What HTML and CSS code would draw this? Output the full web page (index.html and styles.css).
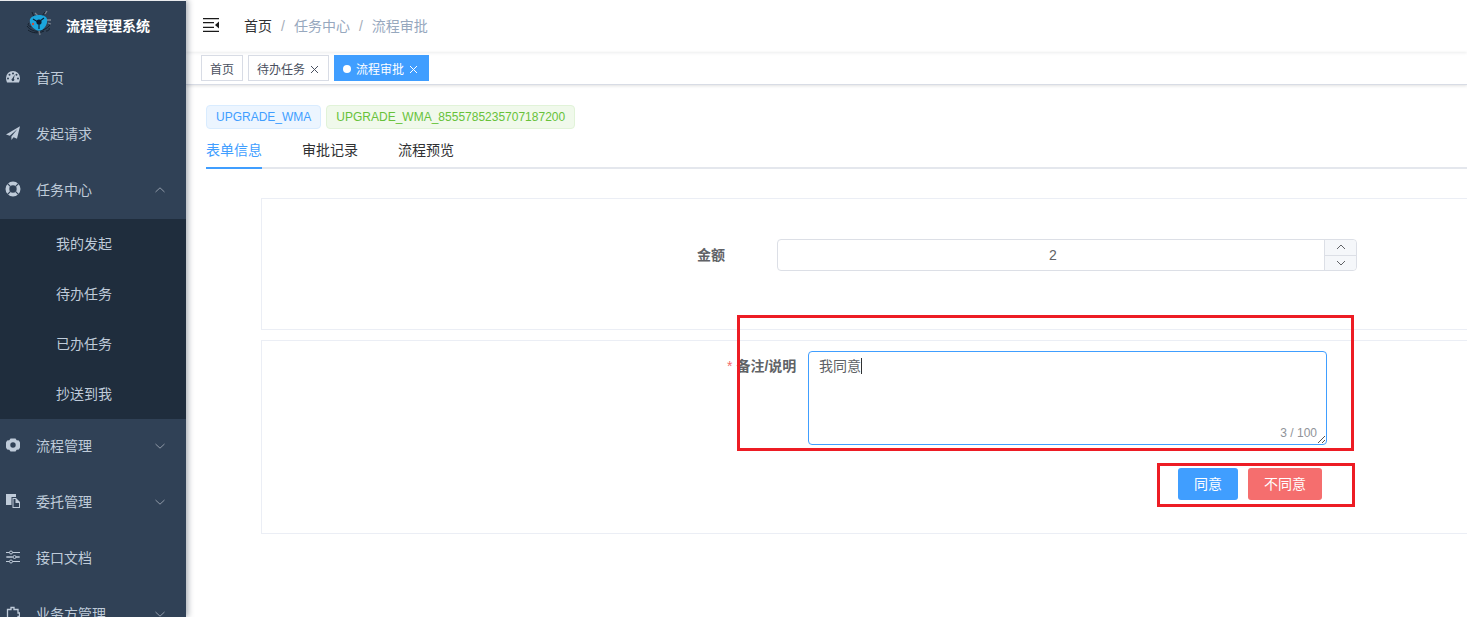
FILE: index.html
```html
<!DOCTYPE html>
<html lang="zh">
<head>
<meta charset="utf-8">
<title>流程管理系统</title>
<link rel="stylesheet" href="styles.css">
</head>
<body>
<div class="app">
  <aside class="sidebar">
    <div class="logo">
      <svg class="logo-img" viewBox="0 0 26 26" width="26" height="26">
        <g fill="none" stroke="#15202c" stroke-width="1"><path d="M1 16c3 4 8 6 12 5s8-2 11-6M2 20c4 3 10 4 16 1M3 13c-2 2 0 3 2 4M20 21c2 0 4-1 3-3"/><path d="M8 7 6 2M16 6l3-4"/></g>
        <path d="M9 3l3 3M21 1l-2 3M21 10h4M22 13l3 1" stroke="#7c8590" stroke-width="1.300" fill="none"/>
        <path d="M4 9c2-3 5-4 9-4s7 1 8 4c1 4-2 9-5 11-2 1-4 1-6 0-4-2-7-7-6-11z" fill="#1ba5dc"/>
        <circle cx="13" cy="12" r="2.600" fill="#0e1e30"/>
        <path d="M7 9l5 3M18 8l-4 3M13 14v5" stroke="#0e1e30" stroke-width="1.100" fill="none"/>
        <circle cx="7" cy="14" r="1.200" fill="#c8503c"/>
        <path d="M13 21l1 4" stroke="#6d7783" stroke-width="1.500"/>
      </svg>
      <span class="logo-title">流程管理系统</span>
    </div>
    <nav class="menu">
      <div class="menu-item">
        <svg class="ico" viewBox="0 0 14 14"><path fill-rule="evenodd" d="M7 1a7 7 0 0 0-7 7c0 1.500.4 3 1 4.500h12c.6-1.500 1-3 1-4.500a7 7 0 0 0-7-7zM7 2.400a1 1 0 1 1 0 2 1 1 0 0 1 0-2zM3.500 3.800a1 1 0 1 1 0 2 1 1 0 0 1 0-2zM10.500 3.800a1 1 0 1 1 0 2 1 1 0 0 1 0-2zM2 7.400a1 1 0 1 1 0 2 1 1 0 0 1 0-2zM12 7.400a1 1 0 1 1 0 2 1 1 0 0 1 0-2zM8.800 4.500 7.900 8.700a1.400 1.400 0 1 1-1.600-.2z"/></svg>
        <span class="menu-label">首页</span>
      </div>
      <div class="menu-item">
        <svg class="ico" viewBox="0 0 14 14"><path d="M14 .2 0 8.400l3.800 1.400L11.500 3 5.400 10.500v3.400l2.200-2.600 3.400 1.400z"/></svg>
        <span class="menu-label">发起请求</span>
      </div>
      <div class="menu-item">
        <svg class="ico ico-ring" viewBox="0 0 16 16"><path fill-rule="evenodd" d="M8 .5a7.500 7.500 0 1 0 0 15 7.500 7.500 0 0 0 0-15zM8 4.300a3.700 3.700 0 1 1 0 7.400 3.700 3.700 0 0 1 0-7.400z"/><path d="M2.300 2.300l3 3M13.700 2.300l-3 3M2.300 13.700l3-3M13.700 13.700l-3-3" stroke="#304156" stroke-width="1.200"/></svg>
        <span class="menu-label">任务中心</span>
        <svg class="chev" viewBox="0 0 12 12"><path d="M1.500 8 6 3.800 10.500 8"/></svg>
      </div>
      <div class="submenu">
        <div class="sub-item">我的发起</div>
        <div class="sub-item">待办任务</div>
        <div class="sub-item">已办任务</div>
        <div class="sub-item">抄送到我</div>
      </div>
      <div class="menu-item">
        <svg class="ico" viewBox="0 0 14 14"><path fill-rule="evenodd" d="M4.500.4h5l1.200 1.900 2.200.1L14 4.500v5l-1.100 2.100-2.200.1-1.200 1.900h-5l-1.200-1.900-2.200-.1L0 9.500v-5l1.100-2.100 2.200-.1zM7 4.300a2.700 2.700 0 1 0 0 5.400 2.700 2.700 0 0 0 0-5.400z"/></svg>
        <span class="menu-label">流程管理</span>
        <svg class="chev" viewBox="0 0 12 12"><path d="M1.500 4 6 8.200 10.500 4"/></svg>
      </div>
      <div class="menu-item">
        <svg class="ico" viewBox="0 0 14 14"><path d="M0 0h10v3H5.500v8H0z"/><path fill-rule="evenodd" d="M6.500 4H10l4 4v6H6.500zM7.500 5v8H13V9H9.500V5z"/></svg>
        <span class="menu-label">委托管理</span>
        <svg class="chev" viewBox="0 0 12 12"><path d="M1.500 4 6 8.200 10.500 4"/></svg>
      </div>
      <div class="menu-item">
        <svg class="ico ico-line" viewBox="0 0 14 14"><path d="M0 2.500h3.500M6.500 2.500H14M0 7h7M10 7h4M0 11.500h3.500M6.500 11.500H14"/><circle cx="5" cy="2.500" r="1.500"/><circle cx="8.500" cy="7" r="1.500"/><circle cx="5" cy="11.500" r="1.500"/><path d="M1 7h5M10 7h3" stroke-width="2" stroke-opacity=".5"/></svg>
        <span class="menu-label">接口文档</span>
      </div>
      <div class="menu-item">
        <svg class="ico ico-line" viewBox="0 0 14 14"><path d="M5 3.500V1.500h3v2h4V7h1.500v3.500H12V14H1.500V3.500z" stroke-width="1.300"/></svg>
        <span class="menu-label">业务方管理</span>
        <svg class="chev" viewBox="0 0 12 12"><path d="M1.500 4 6 8.200 10.500 4"/></svg>
      </div>
    </nav>
  </aside>

  <main class="main">
    <header class="navbar">
      <svg class="hamburger" viewBox="0 0 16 14"><path d="M0 0h16v1.300H0zM0 4h11v1.300H0zM0 8.700h11V10H0zM0 12.700h16V14H0z"/><path d="M16 3.600v6.800L12 7z"/></svg>
      <div class="breadcrumb">
        <span class="crumb-root">首页</span><span class="crumb-sep">/</span><span class="crumb">任务中心</span><span class="crumb-sep">/</span><span class="crumb">流程审批</span>
      </div>
    </header>
    <div class="tags">
      <span class="tag">首页</span>
      <span class="tag tag-close">待办任务<svg class="tag-x" viewBox="0 0 9 9"><path d="M1 1l7 7M8 1 1 8"/></svg></span>
      <span class="tag tag-close tag-active"><i class="dot"></i>流程审批<svg class="tag-x" viewBox="0 0 9 9"><path d="M1 1l7 7M8 1 1 8"/></svg></span>
    </div>
    <section class="content">
      <div class="chips">
        <span class="chip chip-blue">UPGRADE_WMA</span>
        <span class="chip chip-green">UPGRADE_WMA_8555785235707187200</span>
      </div>
      <div class="tabs">
        <span class="tab tab-active">表单信息</span>
        <span class="tab">审批记录</span>
        <span class="tab">流程预览</span>
      </div>
      <div class="panel panel-a">
        <label class="field-label">金额</label>
        <div class="number">
          <span class="number-value">2</span>
          <div class="stepper">
            <span class="step"><svg viewBox="0 0 12 12"><path d="M2 8l4-4 4 4"/></svg></span>
            <span class="step"><svg viewBox="0 0 12 12"><path d="M2 4l4 4 4-4"/></svg></span>
          </div>
        </div>
      </div>
      <div class="panel panel-b">
        <div class="remark-row">
          <label class="remark-label"><span class="req">*</span>备注/说明</label>
          <div class="textarea">
            <span class="textarea-text">我同意</span><span class="caret"></span>
            <span class="count">3 / 100</span>
            <svg class="grip" viewBox="0 0 8 8"><path d="M8 1 1 8M8 5 5 8"/></svg>
          </div>
        </div>
        <div class="actions">
          <span class="btn btn-primary">同意</span>
          <span class="btn btn-danger">不同意</span>
        </div>
      </div>
    </section>
  </main>
</div>
<div class="mark mark-a"></div>
<div class="mark mark-b"></div>
</body>
</html>
```
FILE: styles.css
```css
* { box-sizing: border-box; }
html, body { margin: 0; height: 100%; overflow: hidden; background: #fff; }
body { font-family: "Liberation Sans", "Noto Sans CJK SC", sans-serif; font-size: 14px; color: #303133; }
.app { display: flex; width: 1467px; height: 617px; overflow: hidden; }

.sidebar { width: 186px; flex: none; height: 617px; overflow: hidden; background: #304156; box-shadow: 2px 0 6px rgba(0,21,41,.35); position: relative; z-index: 2; border-top: 1px solid #e9ebee; }
.logo { height: 50px; display: flex; align-items: center; padding: 0 0 3px 26px; }
.logo-img { flex: none; margin-top: -3px; }
.logo-title { margin-left: 14px; color: #fff; font-size: 14px; font-weight: 700; }
.menu-item { height: 56px; display: flex; align-items: center; padding: 0 0 4px 6px; color: #bfcbd9; position: relative; }
.ico { width: 14px; height: 14px; fill: #bfcbd9; flex: none; }
.ico-ring { width: 16px; height: 16px; margin: 0 -1px; }
.ico-line { fill: none; stroke: #bfcbd9; stroke-width: 1; }
.menu-label { margin-left: 16px; }
.chev { position: absolute; left: 154px; top: 21px; width: 12px; height: 12px; fill: none; stroke: #909aa8; stroke-width: 1; }
.submenu { background: #1f2d3d; }
.sub-item { height: 50px; line-height: 50px; padding-left: 56px; color: #bfcbd9; }

.main { flex: 1; min-width: 0; }
.navbar { height: 52px; display: flex; align-items: center; padding: 0 0 2px 17px; box-shadow: 0 1px 3px rgba(0,21,41,.08); }
.hamburger { width: 16px; height: 14px; fill: #1a1a1a; }
.breadcrumb { margin-left: 25px; color: #97a8be; }
.crumb-root { color: #303133; }
.crumb-sep { margin: 0 9px; color: #a5adb8; }
.crumb { color: #97a8be; }
.tags { height: 33px; padding: 3px 0 0 15px; display: flex; gap: 5px; border-bottom: 1px solid #d8dce5; box-shadow: 0 1px 3px rgba(0,0,0,.12); }
.tag { height: 26px; border: 1px solid #d8dce5; padding: 1px 8px 0; font-size: 12px; color: #495060; display: inline-flex; align-items: center; }
.tag-close { padding-right: 9px; }
.tag-x { width: 9px; height: 9px; margin: 2px 0 0 5px; stroke: #495060; fill: none; stroke-width: 1; }
.tag-active { background: #409eff; border-color: #409eff; color: #fff; padding-right: 10px; }
.tag-active .tag-x { stroke: #fff; }
.dot { width: 8px; height: 8px; border-radius: 50%; background: #fff; margin-right: 5px; }

.content { padding: 20px 0 0 20px; }
.chips { display: flex; gap: 5px; }
.chip { height: 24px; line-height: 22px; padding: 0 9px; font-size: 12px; border-radius: 4px; border: 1px solid; }
.chip-blue { background: #ecf5ff; border-color: #d9ecff; color: #409eff; }
.chip-green { background: #f0f9eb; border-color: #e1f3d8; color: #67c23a; }
.tabs { display: flex; gap: 40px; height: 40px; border-bottom: 2px solid #e4e7ed; }
.tab { height: 40px; line-height: 43px; color: #303133; }
.tab-active { color: #409eff; border-bottom: 2px solid #409eff; }

.panel { width: 1300px; margin-left: 55px; border: 1px solid #ebeef5; }
.panel-a { height: 132px; margin-top: 29px; display: flex; padding: 40px 0 0 435px; }
.field-label { width: 80px; line-height: 32px; font-weight: 700; color: #606266; }
.number { width: 580px; height: 32px; border: 1px solid #dcdfe6; border-radius: 4px; position: relative; text-align: center; line-height: 30px; color: #606266; padding-right: 28px; }
.number-value { display: block; }
.stepper { position: absolute; right: 0; top: 0; bottom: 0; width: 32px; background: #f5f7fa; border-left: 1px solid #dcdfe6; border-radius: 0 4px 4px 0; display: flex; flex-direction: column; }
.step { flex: 1; display: flex; align-items: center; justify-content: center; }
.step + .step { border-top: 1px solid #dcdfe6; }
.step svg { width: 12px; height: 12px; fill: none; stroke: #606266; stroke-width: 1; }

.panel-b { height: 194px; margin-top: 10px; padding: 10px 0 0 0; }
.remark-row { display: flex; padding-left: 465px; }
.remark-label { width: 81px; line-height: 30px; font-weight: 700; color: #606266; white-space: nowrap; }
.req { color: #f56c6c; margin-right: 4px; font-weight: 400; }
.textarea { width: 519px; height: 94px; border: 1px solid #409eff; border-radius: 4px; padding: 4px 10px; position: relative; color: #606266; line-height: 20px; }
.caret { display: inline-block; width: 1px; height: 16px; background: #303133; vertical-align: -3px; }
.count { position: absolute; right: 9px; bottom: 3px; font-size: 12px; line-height: 16px; color: #909399; }
.grip { position: absolute; right: 1px; bottom: 1px; width: 8px; height: 8px; stroke: #555; fill: none; stroke-width: 1; }
.actions { display: flex; gap: 10px; margin: 23px 0 0 916px; }
.btn { height: 32px; line-height: 32px; border-radius: 3px; color: #fff; text-align: center; font-size: 14px; }
.btn-primary { width: 60px; background: #409eff; }
.btn-danger { width: 74px; background: #f56c6c; opacity: .98; }

.mark { position: absolute; border: 3px solid #ed1c24; pointer-events: none; z-index: 5; }
.mark-a { left: 737px; top: 315px; width: 617px; height: 136px; }
.mark-b { left: 1157px; top: 463px; width: 198px; height: 44px; }
```
